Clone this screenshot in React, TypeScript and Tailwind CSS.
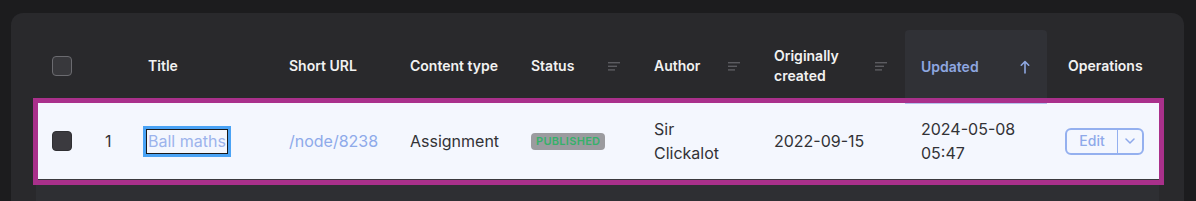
import React from 'react'

const cols = 'grid grid-cols-[53px_43px_141px_121px_121px_123px_120px_147px_142px_112px]'
const rowCols = 'grid grid-cols-[51px_43px_141px_121px_121px_123px_120px_147px_142px_112px]'

function SortIcon() {
  return (
    <svg width="12" height="9" viewBox="0 0 12 9" className="shrink-0">
      <rect x="0" y="0" width="12" height="1.4" fill="#5c5c61" />
      <rect x="0" y="3.6" width="9" height="1.4" fill="#5c5c61" />
      <rect x="0" y="7.2" width="7" height="1.4" fill="#5c5c61" />
    </svg>
  )
}

function ArrowUp() {
  return (
    <svg width="10" height="14" viewBox="0 0 10 14" fill="none" stroke="#8ea7e0" strokeWidth="1.6" strokeLinecap="round" strokeLinejoin="round">
      <path d="M5 1.5V13M1.3 5.2L5 1.5L8.7 5.2" />
    </svg>
  )
}

function Chevron() {
  return (
    <svg width="10" height="6" viewBox="0 0 10 6" fill="none" stroke="#8ea9ea" strokeWidth="1.5" strokeLinecap="round" strokeLinejoin="round">
      <path d="M1 1L5 5L9 1" />
    </svg>
  )
}

function SortHeader({ label }: { label: React.ReactNode }) {
  return (
    <div className="flex items-center justify-between pl-4 pr-[18px]">
      <span>{label}</span>
      <SortIcon />
    </div>
  )
}

export default function App() {
  return (
    <div className="h-[201px] overflow-hidden bg-[#1c1c1e] pt-[13px] pl-[11px] pr-[12px] font-['Inter',sans-serif]">
      <div className="rounded-xl bg-[#29292c] px-[25px] pt-[17px] h-[220px]">
        {/* Header */}
        <div className={`${cols} h-[73px] pb-px text-sm font-semibold leading-5 text-[#f2f2f2]`}>
          <div className="flex items-center pl-4">
            <span className="block h-5 w-5 rounded-[4px] border border-[#6b6b70] bg-[#38383c]" />
          </div>
          <div />
          <div className="flex items-center pl-4">Title</div>
          <div className="flex items-center pl-4">Short URL</div>
          <div className="flex items-center pl-4">Content type</div>
          <SortHeader label="Status" />
          <SortHeader label="Author" />
          <SortHeader
            label={
              <>
                Originally
                <br />
                created
              </>
            }
          />
          <div className="-mb-px flex items-center justify-between rounded-t-[4px] bg-[#303136] pl-4 pr-[17px] text-[#8ea7e0]">
            <span>Updated</span>
            <ArrowUp />
          </div>
          <div className="flex items-center pl-[21px]">Operations</div>
        </div>

        {/* Body */}
        <div className="bg-[#2e2f33]">
          <div
            className={`${rowCols} ml-[2px] h-[77px] border-b border-[#3a3a3e] bg-[#f4f7fe] text-base leading-6 text-[#323236] outline-5 outline-[#a9308b]`}
          >
            <div className="flex items-center pl-[14px]">
              <span className="block h-5 w-5 rounded-[4px] border border-[#2f2f33] bg-[#3b3a3f]" />
            </div>
            <div className="flex items-center pl-4">1</div>
            <div className="flex items-center pl-4">
              <span className="-ml-[2px] border border-[#1a1a1a] px-[1px] leading-[23px] text-[#9cb3ec] outline-3 outline-[#4aa3f5]">
                Ball maths
              </span>
            </div>
            <div className="flex items-center pl-4 text-[#8eaaea]">/node/8238</div>
            <div className="flex items-center pl-4">Assignment</div>
            <div className="flex items-center pl-4">
              <span className="rounded-[4px] bg-[#9b9b9f] px-[5px] text-[11px] leading-[17px] font-semibold tracking-[0.3px] text-[#36b06a]">
                PUBLISHED
              </span>
            </div>
            <div className="flex items-center pl-4">
              <span>
                Sir
                <br />
                Clickalot
              </span>
            </div>
            <div className="flex items-center pl-4">2022-09-15</div>
            <div className="flex items-center pl-4 shadow-[inset_0_1px_0_#b5c3ee]">
              <span>
                2024-05-08
                <br />
                05:47
              </span>
            </div>
            <div className="flex items-center pl-[18px]">
              <div className="flex h-[27px] items-stretch rounded-md border-2 border-[#94b0ef] text-sm font-medium text-[#8ea9ea]">
                <span className="flex w-[50px] items-center justify-center">Edit</span>
                <span className="w-px bg-[#94b0ef]" />
                <span className="flex w-[24px] items-center justify-center">
                  <Chevron />
                </span>
              </div>
            </div>
          </div>
          <div className="h-[40px]" />
        </div>
      </div>
    </div>
  )
}
